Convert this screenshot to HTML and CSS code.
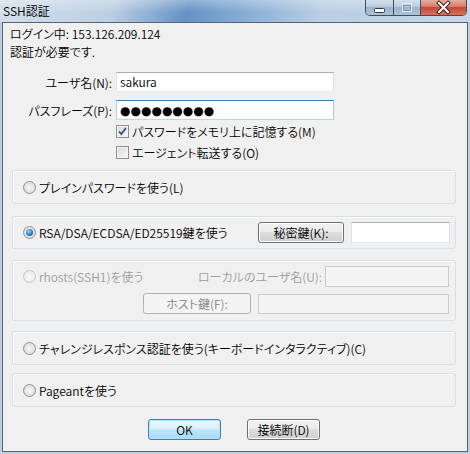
FILE: index.html
```html
<!DOCTYPE html>
<html lang="ja">

<head>
  <meta charset="UTF-8">
  <title>SSH認証</title>
  <link rel="stylesheet" href="styles.css">
</head>

<body>
  <div class="window">
    <div class="titlebar">
      <span class="title">SSH認証</span>
      <div class="caption-buttons">
        <span class="cap cap-min">
          <svg width="27" height="15" viewBox="0 0 27 15">
            <rect x="8.5" y="8.5" width="10" height="4" rx="1" fill="#fff" stroke="#2b3a4e"/>
          </svg>
        </span>
        <span class="cap cap-max">
          <svg width="26" height="15" viewBox="0 0 26 15">
            <rect x="8.5" y="3.5" width="9" height="8" fill="none" stroke="#e6edf5" stroke-width="1"/>
            <rect x="9.5" y="5.5" width="7" height="5" fill="none" stroke="#7f93aa" stroke-width="1"/>
          </svg>
        </span>
        <span class="cap cap-close">
          <svg width="45" height="15" viewBox="0 0 45 15">
            <path d="M18 3 L27 12 M27 3 L18 12" stroke="#3a2424" stroke-width="4" stroke-linecap="square"/>
            <path d="M18 3 L27 12 M27 3 L18 12" stroke="#fff" stroke-width="2" stroke-linecap="square"/>
          </svg>
        </span>
      </div>
    </div>

    <div class="client">
      <div class="line">ログイン中: 153.126.209.124</div>
      <div class="line line-next">認証が必要です.</div>

      <div class="field field-user">
        <span class="field-label">ユーザ名(N):</span>
        <div class="textbox">sakura</div>
      </div>
      <div class="field field-pass">
        <span class="field-label">パスフレーズ(P):</span>
        <div class="textbox textbox-focus"><span class="dots">●●●●●●●●●</span></div>
      </div>

      <div class="check check-first">
        <span class="checkbox">
          <svg width="11" height="11" viewBox="0 0 11 11">
            <path d="M2 5.5 L4.3 8 L9 2" fill="none" stroke="#3b4f82" stroke-width="1.8"/>
          </svg>
        </span>
        <span>パスワードをメモリ上に記憶する(M)</span>
      </div>
      <div class="check check-second">
        <span class="checkbox"></span>
        <span>エージェント転送する(O)</span>
      </div>

      <div class="group group-plain">
        <span class="option"><span class="radio"></span>プレインパスワードを使う(L)</span>
      </div>

      <div class="group group-key">
        <span class="option option-key"><span class="radio checked"></span>RSA/DSA/ECDSA/ED25519鍵を使う</span>
        <button class="btn btn-key">秘密鍵(K):</button>
        <div class="textbox textbox-key"></div>
      </div>

      <div class="group group-rhosts">
        <div class="rhosts-row">
          <span class="option disabled"><span class="radio"></span>rhosts(SSH1)を使う</span>
          <span class="local-label disabled">ローカルのユーザ名(U):</span>
          <div class="textbox textbox-disabled textbox-local"></div>
        </div>
        <div class="rhosts-row rhosts-row-end">
          <button class="btn btn-host" disabled>ホスト鍵(F):</button>
          <div class="textbox textbox-disabled textbox-host"></div>
        </div>
      </div>

      <div class="group group-challenge">
        <span class="option"><span class="radio"></span>チャレンジレスポンス認証を使う(キーボードインタラクティブ)(C)</span>
      </div>

      <div class="group group-pageant">
        <span class="option"><span class="radio"></span>Pageantを使う</span>
      </div>

      <div class="actions">
        <button class="btn btn-default">OK</button>
        <button class="btn">接続断(D)</button>
      </div>
    </div>
  </div>
</body>

</html>
```

FILE: styles.css
```css
* {
  box-sizing: border-box;
}

body {
  margin: 0;
  font-family: "Noto Sans CJK JP", "Noto Sans", sans-serif;
  font-size: 12px;
  font-weight: 350;
  font-feature-settings: "palt";
  color: #000;
}

/* window frame */
.window {
  width: 470px;
  height: 454px;
  display: flex;
  flex-direction: column;
  padding: 0 2px 2px;
  background: #bccfe3;
}

.titlebar {
  height: 22px;
  margin: 0 -2px;
  display: flex;
  align-items: flex-start;
  background:
    linear-gradient(to bottom, rgba(255, 255, 255, 0.3), rgba(255, 255, 255, 0) 55%),
    linear-gradient(105deg, #d3dfeb 0%, #bccfe3 24%, #6592c5 40%, #8db1d7 54%, #b9cee3 68%, #c7d7e8 100%);
}

.title {
  padding: 3px 0 0 3px;
  line-height: 16px;
}

.caption-buttons {
  margin-left: auto;
  margin-right: 3px;
  display: flex;
  height: 16px;
  border: 1px solid #3f4d62;
  border-top: none;
  border-radius: 0 0 5px 5px;
  overflow: hidden;
}

.cap {
  display: block;
  height: 15px;
}

.cap svg {
  display: block;
}

.cap-min,
.cap-max {
  background: linear-gradient(#d5e0ec 0%, #bccde0 45%, #9db4cd 50%, #aec2d7 100%);
  border-right: 1px solid #3f4d62;
}

.cap-min {
  width: 28px;
}

.cap-max {
  width: 27px;
}

.cap-close {
  width: 45px;
  background: linear-gradient(#e7ab9f 0%, #d67c69 45%, #c44a34 50%, #d4735c 100%);
}

/* client area */
.client {
  flex: 1;
  display: flex;
  flex-direction: column;
  padding-top: 4px;
  background: #f0f0f0;
  border: 1px solid #5b6572;
}

.line {
  height: 14px;
  line-height: 14px;
  padding-left: 7px;
}

.line-next {
  margin-top: 4px;
}

.field {
  display: flex;
  align-items: center;
  height: 20px;
}

.field-user {
  margin-top: 13px;
}

.field-pass {
  margin-top: 8px;
}

.field-label {
  width: 109px;
  margin-right: 4px;
  text-align: right;
}

.textbox {
  height: 20px;
  line-height: 18px;
  padding-left: 3px;
  background: #fff;
  border: 1px solid;
  border-color: #abadb3 #dbdfe6 #e3e9ef #e2e3ea;
}

.field .textbox {
  width: 218px;
}

.textbox-focus {
  border-color: #3d7bad #a4c9e3 #b7d9ed #b5cfe7;
}

.dots {
  font-family: "DejaVu Sans", sans-serif;
  font-size: 12px;
  font-weight: 400;
}

.textbox-disabled {
  background: #f4f4f4;
  border-color: #c7cbd0;
}

.check {
  display: flex;
  align-items: center;
  gap: 3px;
  height: 14px;
  margin-left: 113px;
}

.check-first {
  margin-top: 4px;
}

.check-second {
  margin-top: 7px;
}

.checkbox {
  width: 13px;
  height: 13px;
  display: flex;
  align-items: center;
  justify-content: center;
  border: 1px solid #8f8f8f;
  background: linear-gradient(135deg, #dadada, #f7f7f7);
  box-shadow: inset 0 0 0 1px #f4f4f4;
}

.checkbox svg {
  display: block;
}

/* radio groups */
.group {
  width: 444px;
  margin-left: 9px;
  display: flex;
  align-items: center;
  padding-left: 10px;
  border: 1px solid #d5dfe5;
  border-radius: 3px;
  box-shadow: inset 1px 1px 0 #fff;
}

.group-plain {
  height: 34px;
  margin-top: 11px;
}

.group-key {
  height: 33px;
  margin-top: 12px;
}

.group-rhosts {
  height: 61px;
  margin-top: 11px;
  flex-direction: column;
  align-items: stretch;
  padding: 5px 6px 0 10px;
}

.group-challenge {
  height: 34px;
  margin-top: 10px;
}

.group-pageant {
  height: 34px;
  margin-top: 8px;
}

.option {
  display: flex;
  align-items: center;
  gap: 3px;
}

.option-key {
  width: 235px;
}

.radio {
  position: relative;
  width: 13px;
  height: 13px;
  border-radius: 50%;
  border: 1px solid #8d9095;
  background: radial-gradient(circle at 50% 50%, #f6f6f6 0, #e9e9e9 45%, #cfcfcf 100%);
}

.radio.checked::after {
  content: "";
  position: absolute;
  left: 2px;
  top: 2px;
  width: 7px;
  height: 7px;
  border-radius: 50%;
  background: radial-gradient(circle at 40% 35%, #8fdcf8 0, #2c7cc0 55%, #14416e 100%);
}

.disabled {
  color: #9d9d9d;
}

.disabled .radio {
  border-color: #c2c4c7;
  background: radial-gradient(circle at 50% 50%, #fafafa 0, #f0f0f0 50%, #e2e2e2 100%);
}

.btn {
  height: 21px;
  padding: 0;
  font-family: inherit;
  font-size: 12px;
  font-weight: 350;
  font-feature-settings: "palt";
  color: #000;
  border: 1px solid #707070;
  border-radius: 3px;
  background: linear-gradient(#f2f2f2 0%, #ebebeb 50%, #dddddd 50%, #cfcfcf 100%);
  box-shadow: inset 0 0 0 1px #fcfcfc;
}

.btn:disabled {
  color: #838383;
  border-color: #adb2b5;
  background: #f4f4f4;
  box-shadow: none;
}

.btn-key {
  width: 86px;
}

.textbox-key {
  width: 99px;
  height: 21px;
  margin-left: 7px;
}

.rhosts-row {
  display: flex;
  align-items: center;
  height: 21px;
}

.rhosts-row-end {
  justify-content: flex-end;
  margin-top: 6px;
  gap: 7px;
}

.local-label {
  margin-left: auto;
  margin-right: 3px;
}

.textbox-local {
  width: 124px;
  height: 21px;
}

.btn-host {
  width: 108px;
}

.textbox-host {
  width: 191px;
}

.actions {
  display: flex;
  gap: 26px;
  height: 21px;
  margin-top: 12px;
  padding-left: 145px;
}

.actions .btn {
  width: 73px;
}

.btn-default {
  border-color: #3c7fb1;
  background: linear-gradient(#eaf6fd 0%, #d9f0fc 50%, #bee6fd 50%, #a7d9f5 100%);
  box-shadow: inset 0 0 0 1px #b3e4f9;
}
```
